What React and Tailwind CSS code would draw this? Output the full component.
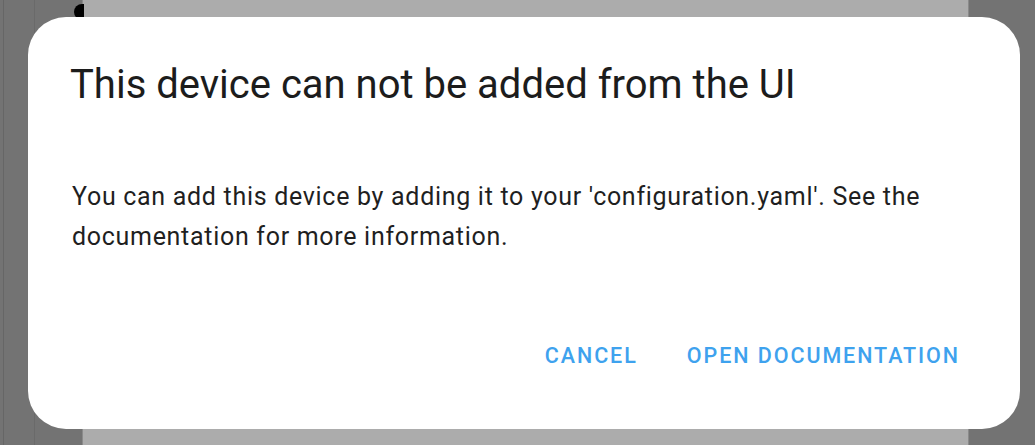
export default function App() {
  return (
    <div className="relative w-[1035px] h-[445px] overflow-hidden bg-[#737373]" style={{ fontFamily: "Roboto, 'Noto Sans', sans-serif" }}>
      <div className="flex h-full">
        <div className="relative w-[82px] h-full bg-[#737373]">
          <div className="absolute left-[3px] top-0 bottom-0 w-px bg-[#666666]" />
          <div className="absolute left-[34px] top-0 bottom-0 w-px bg-[#6a6a6a]" />
          <div className="absolute left-[74px] top-[4px] w-[10px] h-[16px] rounded-l-full bg-black" />
        </div>
        <div className="flex-1 h-full bg-[#acacac] border-l border-[#8a8a8a]" />
        <div className="w-[67px] h-full bg-[#737373] border-l border-[#8a8a8a]" />
      </div>
      <div className="absolute left-[28px] top-[17px] w-[992px] h-[412px] rounded-[38px] bg-white flex flex-col">
        <h2 className="pl-[42px] pt-[46px] text-[40px] leading-[44px] text-[#1c1c1c] font-normal">
          This device can not be added from the UI
        </h2>
        <p className="pl-[44px] pr-[80px] pt-[70px] text-[25px] leading-[40px] tracking-[0.028em] text-[#1f1f1f]">
          You can add this device by adding it to your 'configuration.yaml'. See the documentation for more information.
        </p>
        <div className="mt-auto mb-[60px] flex justify-end gap-[49px] pr-[60px] text-[21.5px] leading-[26px] font-medium tracking-[0.09em] text-[#3ea2ee]">
          <span>CANCEL</span>
          <span>OPEN DOCUMENTATION</span>
        </div>
      </div>
    </div>
  );
}
